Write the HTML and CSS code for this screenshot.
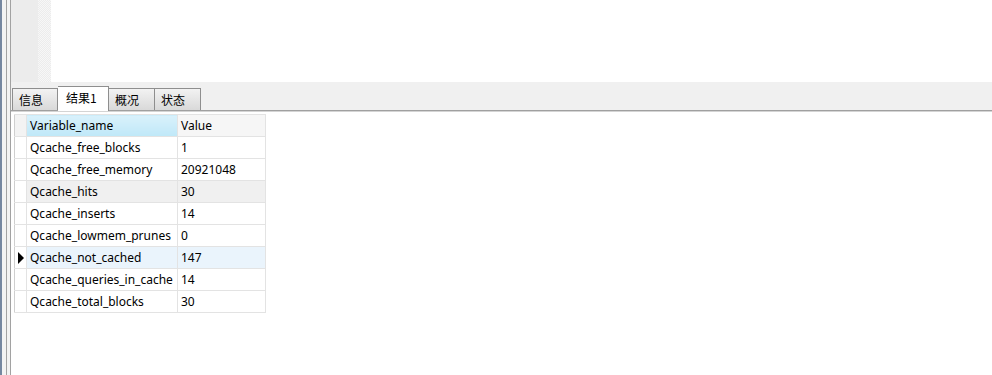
FILE: index.html
```html
<!DOCTYPE html>
<html>
<head>
<meta charset="utf-8">
<link rel="stylesheet" href="styles.css">
</head>
<body>
<div class="app">
  <div class="editor">
    <div class="gutter"></div>
    <div class="fold"></div>
    <div class="text"></div>
  </div>
  <div class="tabbar">
    <div class="tab">信息</div>
    <div class="tab active">结果1</div>
    <div class="tab">概况</div>
    <div class="tab">状态</div>
  </div>
  <div class="result">
    <table class="grid">
      <tr class="head"><td class="ind"></td><td class="c1">Variable_name</td><td class="c2">Value</td></tr>
      <tr><td class="ind"></td><td>Qcache_free_blocks</td><td>1</td></tr>
      <tr><td class="ind"></td><td>Qcache_free_memory</td><td>20921048</td></tr>
      <tr class="alt"><td class="ind"></td><td>Qcache_hits</td><td>30</td></tr>
      <tr><td class="ind"></td><td>Qcache_inserts</td><td>14</td></tr>
      <tr><td class="ind"></td><td>Qcache_lowmem_prunes</td><td>0</td></tr>
      <tr class="sel"><td class="ind"><span class="arrow"></span></td><td>Qcache_not_cached</td><td>147</td></tr>
      <tr><td class="ind"></td><td>Qcache_queries_in_cache</td><td>14</td></tr>
      <tr><td class="ind"></td><td>Qcache_total_blocks</td><td>30</td></tr>
    </table>
  </div>
</div>
</body>
</html>
```
FILE: styles.css
```css
html, body { margin: 0; padding: 0; background: #fff; }
body { font-family: "Noto Sans", "Noto Sans CJK SC", sans-serif; font-size: 12px; color: #000; }
.app {
  height: 375px;
  display: flex;
  flex-direction: column;
  padding-left: 11px;
  background: linear-gradient(to right, #7587a0 0 2px, #f3f3f3 2px 6px, #a2a2a2 6px 7px, #f3f3f3 7px 10px, #a2a2a2 10px 11px, #fff 11px);
}
.editor { height: 82px; display: flex; }
.gutter { width: 27px; background: #ececec; }
.fold {
  width: 13px;
  background-color: #f7f7f7;
  background-image: conic-gradient(#ececec 25%, transparent 0 50%, #ececec 0 75%, transparent 0);
  background-size: 2px 2px;
}
.text { flex: 1; background: #fff; }
.tabbar {
  height: 28px;
  background: #f0f0f0;
  display: flex;
  align-items: flex-end;
  padding-left: 1px;
  border-bottom: 1px solid #a0a0a0;
  box-shadow: 0 1px 0 #d4d4d4;
  position: relative;
  z-index: 1;
}
.tab {
  height: 21px;
  width: 39px;
  box-sizing: content-box;
  border: 1px solid #8e8e8e;
  border-bottom: none;
  border-left: none;
  background: linear-gradient(#f2f2f2, #d9d9d9);
  padding-left: 6px;
  line-height: 22px;
  font-family: "Noto Sans CJK SC", sans-serif;
  font-size: 12px;
}
.tab:first-child { border-left: 1px solid #8e8e8e; width: 38px; }
.tab.active {
  height: 24px;
  width: 42px;
  background: #fff;
  padding-left: 8px;
  line-height: 22px;
  margin-bottom: -1px;
  border-left: none;
}
.result { flex: 1; padding: 3px 0 0 3px; background: #fff; }
.grid { border-collapse: collapse; }
.grid td {
  height: 21px;
  padding: 0 0 0 3px;
  border: 1px solid #e3e3e3;
  white-space: nowrap;
  line-height: 21px;
}
.grid td:nth-child(2) { width: 147px; }
.grid td:nth-child(3) { width: 84px; }
.grid td.ind { width: 11px; padding: 0; background: #fff; border-left: 1px solid #cfcfcf; }
.grid tr.head td.c1 { background: linear-gradient(#d9f1fb, #bfe8f8); }
.grid tr.head td.c2 { background: #f6f6f6; }
.grid tr.head td.ind { background: #f3f3f3; }
.grid tr.alt td:not(.ind) { background: #f0f0f0; }
.grid tr.sel td:not(.ind) { background: #eaf4fc; }
.arrow {
  display: block;
  width: 0; height: 0;
  margin-left: 3px;
  border-left: 6px solid #000;
  border-top: 6px solid transparent;
  border-bottom: 6px solid transparent;
}
```
